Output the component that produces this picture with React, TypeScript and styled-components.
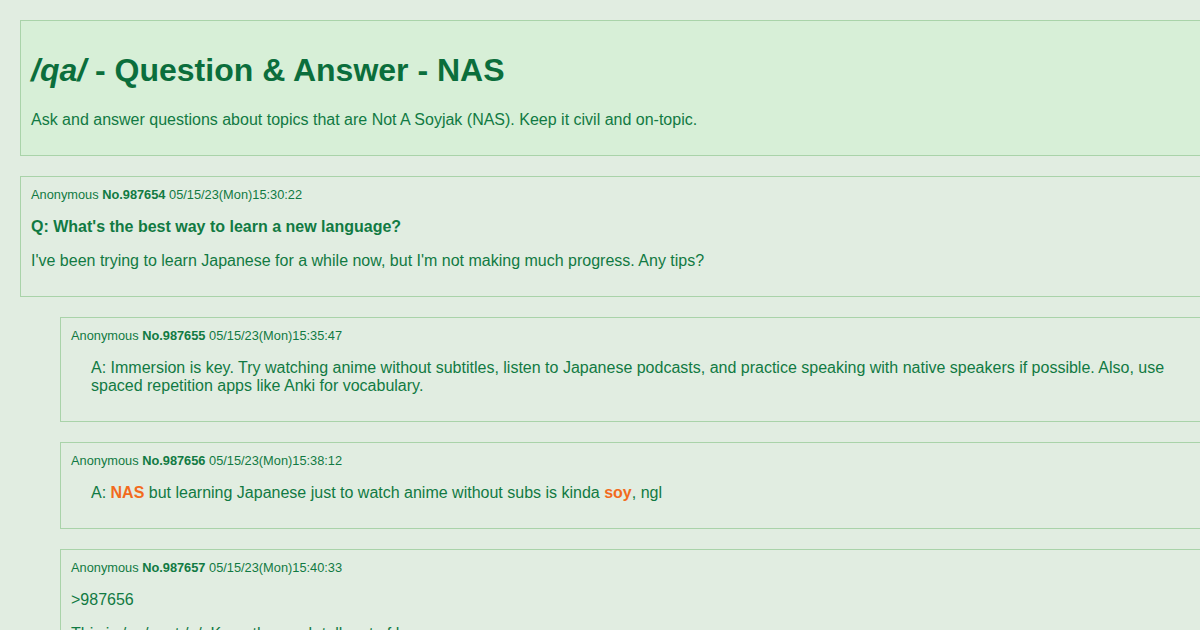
import { createGlobalStyle } from 'styled-components'
import styled from 'styled-components'

const Colors = {
  Page: '#e1ede1',
  Header: '#d7efd7',
  Border: '#a9d3a9',
  Text: '#117a43',
  Title: '#0b6e3c',
  Highlight: '#f26b1d',
}

interface Reply {
  no: number
  date: string
}

const GlobalStyle = createGlobalStyle`
  html,
  body {
    overflow: hidden;
  }

  body {
    margin: 0;
    padding: 20px;
    background-color: ${Colors.Page};
    color: ${Colors.Text};
    font-family: 'Liberation Sans', Arial, sans-serif;
    font-size: 16px;
  }
`

const PostMeta = ({ no, date }: Reply) => (
  <Meta>
    Anonymous <PostNo>No.{no}</PostNo> {date}
  </Meta>
)

export default function App() {
  return (
    <>
      <GlobalStyle />
      <BoardHeader>
        <BoardTitle>
          <em>/qa/</em> - Question &amp; Answer - NAS
        </BoardTitle>
        <Paragraph>Ask and answer questions about topics that are Not A Soyjak (NAS). Keep it civil and on-topic.</Paragraph>
      </BoardHeader>

      <Post>
        <PostMeta no={987654} date="05/15/23(Mon)15:30:22" />
        <Question>Q: What's the best way to learn a new language?</Question>
        <Paragraph>I've been trying to learn Japanese for a while now, but I'm not making much progress. Any tips?</Paragraph>
      </Post>

      <Post $reply>
        <PostMeta no={987655} date="05/15/23(Mon)15:35:47" />
        <Answer>
          A: Immersion is key. Try watching anime without subtitles, listen to Japanese podcasts, and practice speaking
          with native speakers if possible. Also, use spaced repetition apps like Anki for vocabulary.
        </Answer>
      </Post>

      <Post $reply>
        <PostMeta no={987656} date="05/15/23(Mon)15:38:12" />
        <Answer>
          A: <Highlight>NAS</Highlight> but learning Japanese just to watch anime without subs is kinda{' '}
          <Highlight>soy</Highlight>, ngl
        </Answer>
      </Post>

      <Post $reply>
        <PostMeta no={987657} date="05/15/23(Mon)15:40:33" />
        <Paragraph>&gt;987656</Paragraph>
        <Paragraph>This is /qa/, not /a/. Keep the weeb talk out of here.</Paragraph>
      </Post>
    </>
  )
}

const Box = styled.div`
  width: 100%;
  margin-bottom: 20px;
  padding: 10px;
  border: 1px solid ${Colors.Border};
`

const BoardHeader = styled(Box)`
  background-color: ${Colors.Header};
`

const Post = styled(Box)<{ $reply?: boolean }>`
  margin-left: ${({ $reply }) => ($reply ? '40px' : '0')};
  background-color: ${Colors.Page};
`

const BoardTitle = styled.h1`
  margin: 0.67em 0;
  color: ${Colors.Title};
  font-size: 32px;
  font-weight: bold;
`

const Paragraph = styled.p`
  margin: 16px 0;
  line-height: normal;
`

const Question = styled(Paragraph)`
  font-weight: bold;
`

const Answer = styled.blockquote`
  margin: 16px 20px;
`

const Meta = styled.div`
  font-size: 0.8em;
  line-height: 15px;
`

const PostNo = styled.span`
  font-weight: bold;
`

const Highlight = styled.span`
  color: ${Colors.Highlight};
  font-weight: bold;
`
